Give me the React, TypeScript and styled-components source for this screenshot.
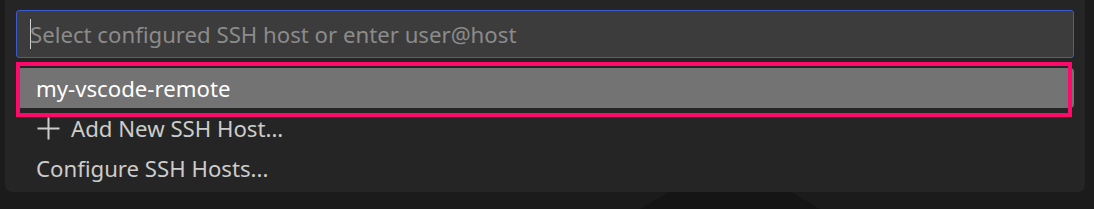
import styled, { createGlobalStyle } from 'styled-components';

const GlobalStyle = createGlobalStyle`
  html, body {
    margin: 0;
    padding: 0;
    background: #1b1b1b;
  }
  body {
    width: 1094px;
    height: 209px;
    overflow: hidden;
    font-family: "Noto Sans", "Open Sans", sans-serif;
  }
`;

const Page = styled.div`
  display: flex;
  flex-direction: column;
  height: 209px;
`;

const Panel = styled.div`
  margin-left: 5px;
  width: 1080px;
  box-sizing: border-box;
  padding: 10px 11px 4px 11px;
  background: #252525;
  border-radius: 0 0 7px 7px;
  display: flex;
  flex-direction: column;
  gap: 10px;
`;

const InputBox = styled.div`
  height: 48px;
  box-sizing: border-box;
  border: 1px solid #3a5ccc;
  border-radius: 3px;
  background: #3c3c3c;
  display: flex;
  align-items: center;
  padding-left: 13px;
`;

const Caret = styled.span`
  width: 1px;
  height: 30px;
  background: #d0d0d0;
  margin-right: -1px;
`;

const Placeholder = styled.span`
  color: #8b8b8b;
  font-size: 22.2px;
  white-space: nowrap;
`;

const List = styled.div`
  position: relative;
  display: flex;
  flex-direction: column;
`;

const Row = styled.div<{ $selected?: boolean }>`
  height: 40px;
  display: flex;
  align-items: center;
  gap: 10px;
  padding-left: 20px;
  border-radius: 4px;
  background: ${p => (p.$selected ? '#737373' : 'transparent')};
  color: ${p => (p.$selected ? '#ffffff' : '#cccccc')};
  font-size: 22.2px;
  white-space: nowrap;
`;

const Highlight = styled.div`
  position: absolute;
  left: 0;
  top: -6px;
  width: 1056px;
  height: 55px;
  box-sizing: border-box;
  border: 4.5px solid #ff0a6a;
  pointer-events: none;
`;

const Footer = styled.div`
  flex: 1;
  display: flex;
`;

const Shade = styled.div`
  margin-left: 640px;
  width: 180px;
  height: 100%;
  background: #151515;
  clip-path: polygon(16% 0, 84% 0, 100% 100%, 0 100%);
`;

const PlusIcon = () => (
  <svg width="25" height="25" viewBox="0 0 25 25" fill="none">
    <path d="M12.5 1.5v22M1.5 12.5h22" stroke="#cccccc" strokeWidth="2" />
  </svg>
);

export default function App() {
  return (
    <>
      <GlobalStyle />
      <Page>
        <Panel>
          <InputBox>
            <Caret />
            <Placeholder>Select configured SSH host or enter user@host</Placeholder>
          </InputBox>
          <List>
            <Row $selected>my-vscode-remote</Row>
            <Row>
              <PlusIcon />
              Add New SSH Host...
            </Row>
            <Row>Configure SSH Hosts...</Row>
            <Highlight />
          </List>
        </Panel>
        <Footer>
          <Shade />
        </Footer>
      </Page>
    </>
  );
}
